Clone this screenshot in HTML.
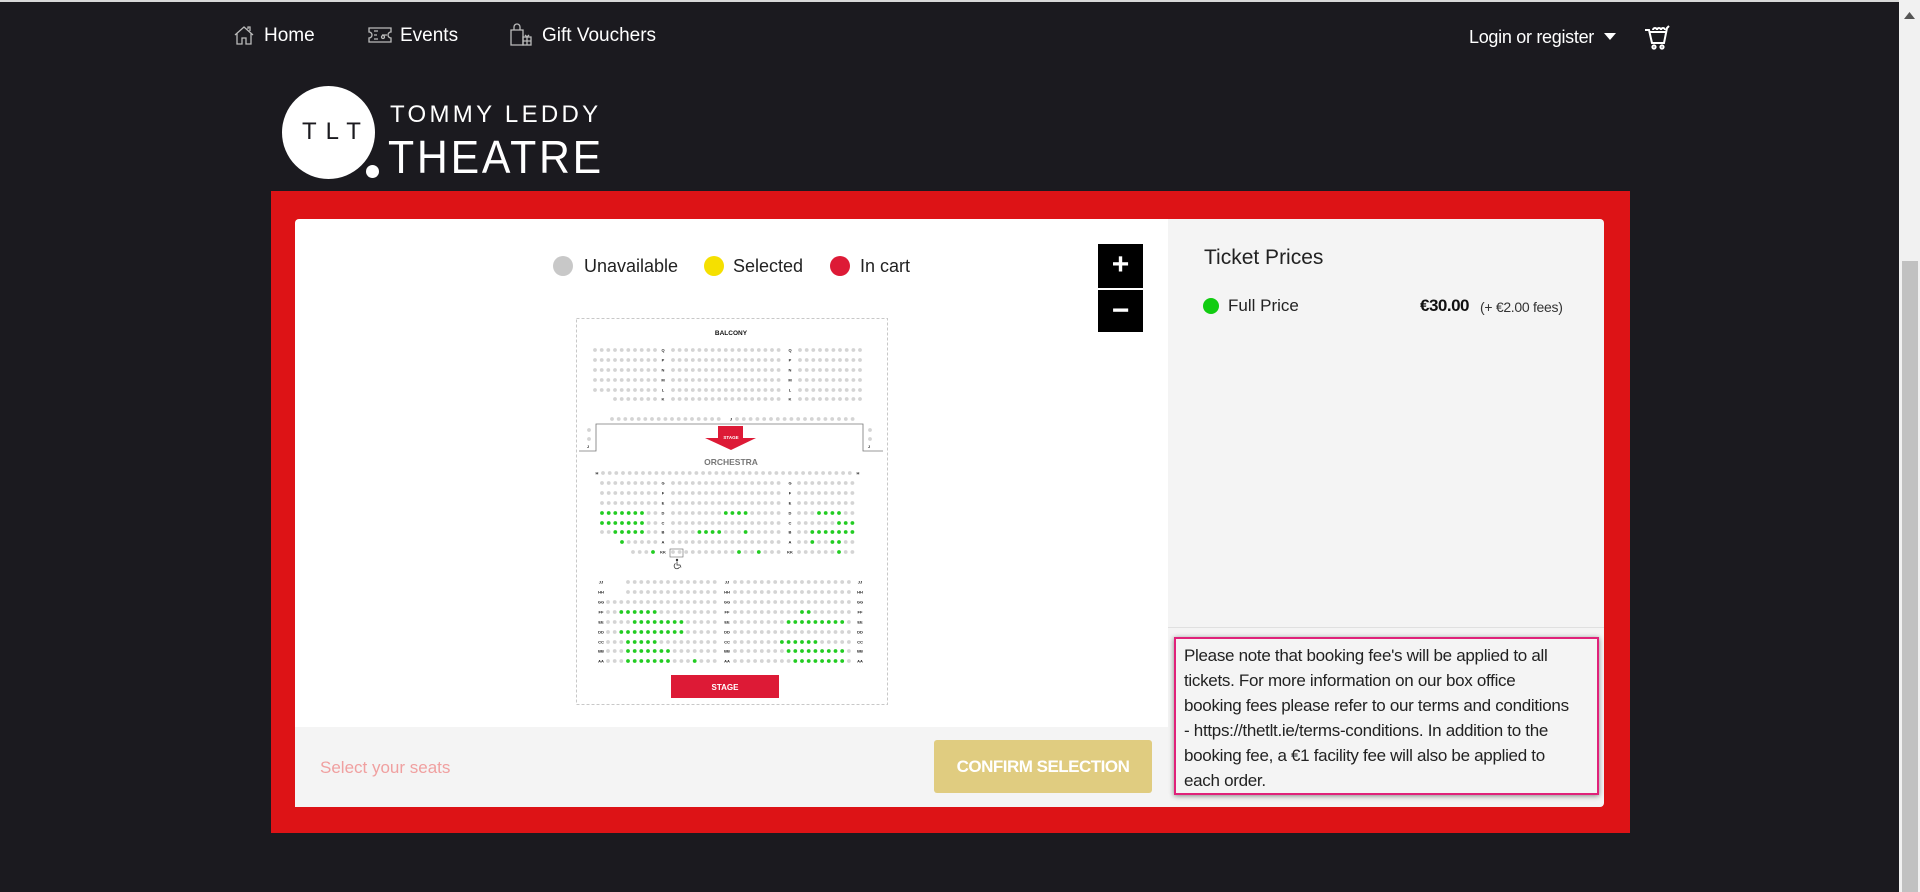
<!DOCTYPE html>
<html><head><meta charset="utf-8">
<style>
*{margin:0;padding:0;box-sizing:border-box}
html,body{width:1920px;height:892px;overflow:hidden;background:#1b1a1f;font-family:"Liberation Sans",sans-serif}
.abs{position:absolute}
.nav{color:#fff;font-size:19px;top:25px}
.topline{left:0;top:0;width:1920px;height:2px;background:#d8d8d8}
.sb{left:1899px;top:0;width:21px;height:892px;background:#f1f1f1}
.thumb{left:1902px;top:261px;width:16px;height:631px;background:#c1c1c1}
.red{left:271px;top:191px;width:1359px;height:642px;background:#dd1316}
.white{left:295px;top:219px;width:873px;height:588px;background:#fff;border-radius:4px 0 0 4px}
.gray{left:1168px;top:219px;width:436px;height:588px;background:#f4f4f4;border-radius:0 4px 4px 0}
.leg{top:256px;font-size:18px;color:#222}
.dot{width:20px;height:20px;border-radius:50%;top:256px}
.zb{left:1098px;width:45px;background:#000;color:#fff;font-size:30px;text-align:center;line-height:42px;font-weight:bold}
.notice{left:1174px;top:637px;width:425px;height:158px;border:2px solid #e0227a;box-shadow:0 1px 5px rgba(0,0,0,.45);padding:4px 0 0 8px;font-size:17px;line-height:25px;color:#222;white-space:nowrap;letter-spacing:-0.3px}
</style></head><body>
<div class="abs topline"></div>
<svg class="abs" style="left:233px;top:24px" width="22" height="22" viewBox="0 0 22 22" fill="none" stroke="#bbb" stroke-width="1.3"><path d="M2 11 L11 3 L20 11 M4 9 V20 H9 V14 H13 V20 H18 V9 M15 5 V3 H17 V7"/></svg>
<div class="abs nav" style="left:264px">Home</div>
<svg class="abs" style="left:368px;top:26px" width="24" height="18" viewBox="0 0 24 18" fill="none" stroke="#bbb" stroke-width="1.3"><path d="M1 2 H23 V6 A3 3 0 0 0 23 12 V16 H1 V12 A3 3 0 0 0 1 6 Z M6 5 H10 M6 9 H9 M6 13 H10 M14 9 h5"/><circle cx="15" cy="11" r="1.5"/></svg>
<div class="abs nav" style="left:400px">Events</div>
<svg class="abs" style="left:509px;top:23px" width="24" height="24" viewBox="0 0 24 24" fill="none" stroke="#bbb" stroke-width="1.3"><path d="M2 7 H14 V22 H2 Z M5 7 V4 A3 3 0 0 1 11 4 V7"/><rect x="14" y="14" width="8" height="8"/><path d="M18 14 V22 M14 18 H22 M16 12 l2 2 l2 -2"/></svg>
<div class="abs nav" style="left:542px">Gift Vouchers</div>
<div class="abs nav" style="left:1469px;top:27px;font-size:18px;letter-spacing:-0.3px">Login or register</div>
<svg class="abs" style="left:1604px;top:33px" width="12" height="8"><path d="M0 0 H12 L6 7 Z" fill="#fff"/></svg>
<svg class="abs" style="left:1644px;top:23px" width="26" height="28" viewBox="0 0 26 28" fill="none" stroke="#fff" stroke-width="2"><path d="M1 7 H5 L8 20 H20 L23 5 L25 3 M5 9 H22"/><circle cx="10" cy="24" r="1.6"/><circle cx="18" cy="24" r="1.6"/><path d="M9 7 a2 2 0 0 1 4 0 a2 2 0 0 1 4 0 a2 2 0 0 1 4 0"/></svg>
<div class="abs" style="left:282px;top:86px;width:93px;height:93px;border-radius:50%;background:#fff"></div>
<div class="abs" style="left:366px;top:165px;width:13px;height:13px;border-radius:50%;background:#fff"></div>
<div class="abs" style="left:293px;top:118px;width:70px;text-align:center;font-size:24px;letter-spacing:9px;color:#1b1a1f;padding-left:9px">TLT</div>
<div class="abs" style="left:390px;top:101px;font-size:24px;letter-spacing:3.3px;color:#fff">TOMMY LEDDY</div>
<div class="abs" style="left:388px;top:133px;font-size:46px;letter-spacing:3px;color:#fff;line-height:48px;transform:scaleX(0.93);transform-origin:left">THEATRE</div>
<div class="abs sb"></div>
<svg class="abs" style="left:1904px;top:12px" width="11" height="7"><path d="M0 7 L5.5 0 L11 7Z" fill="#555"/></svg>
<div class="abs thumb"></div>
<div class="abs red"></div>
<div class="abs white"></div>
<div class="abs gray"></div>
<div class="abs" style="left:1168px;top:627px;width:436px;height:1px;background:#e0e0e0"></div>
<div class="abs dot" style="left:553px;background:#c8c8c8"></div>
<div class="abs leg" style="left:584px">Unavailable</div>
<div class="abs dot" style="left:704px;background:#f5e000"></div>
<div class="abs leg" style="left:733px">Selected</div>
<div class="abs dot" style="left:830px;background:#dd1a36"></div>
<div class="abs leg" style="left:860px">In cart</div>
<div class="abs zb" style="top:244px;height:44px">+</div>
<div class="abs zb" style="top:290px;height:42px">−</div>
<svg id="map" class="abs" style="left:560px;top:310px" width="340" height="400" viewBox="0 0 340 400" font-family="Liberation Sans" font-weight="bold">
<rect x="16.5" y="8.5" width="311" height="386" fill="none" stroke="#c8c8c8" stroke-dasharray="3 2"/>
<text x="171" y="25" font-size="6.5" text-anchor="middle" fill="#111">BALCONY</text>
<g font-size="4" fill="#222" text-anchor="middle">
<text x="103" y="41.5">Q</text><text x="230" y="41.5">Q</text>
<text x="103" y="51.5">P</text><text x="230" y="51.5">P</text>
<text x="103" y="61.5">N</text><text x="230" y="61.5">N</text>
<text x="103" y="71.5">M</text><text x="230" y="71.5">M</text>
<text x="103" y="81.5">L</text><text x="230" y="81.5">L</text>
<text x="103" y="90.5">K</text><text x="230" y="90.5">K</text>
<text x="171" y="110.5">J</text><text x="28" y="138">J</text><text x="309" y="138">J</text>
<text x="37" y="164.5">H</text><text x="298" y="164.5">H</text>
<text x="103" y="174.5">G</text><text x="230" y="174.5">G</text>
<text x="103" y="184.5">F</text><text x="230" y="184.5">F</text>
<text x="103" y="194.5">E</text><text x="230" y="194.5">E</text>
<text x="103" y="204.5">D</text><text x="230" y="204.5">D</text>
<text x="103" y="214.5">C</text><text x="230" y="214.5">C</text>
<text x="103" y="223.5">B</text><text x="230" y="223.5">B</text>
<text x="103" y="233.5">A</text><text x="230" y="233.5">A</text>
<text x="103" y="243.5">KK</text><text x="230" y="243.5">KK</text>
<text x="41" y="273.5">JJ</text><text x="167" y="273.5">JJ</text><text x="300" y="273.5">JJ</text>
<text x="41" y="283.5">HH</text><text x="167" y="283.5">HH</text><text x="300" y="283.5">HH</text>
<text x="41" y="293.5">GG</text><text x="167" y="293.5">GG</text><text x="300" y="293.5">GG</text>
<text x="41" y="303.5">FF</text><text x="167" y="303.5">FF</text><text x="300" y="303.5">FF</text>
<text x="41" y="313.5">EE</text><text x="167" y="313.5">EE</text><text x="300" y="313.5">EE</text>
<text x="41" y="323.5">DD</text><text x="167" y="323.5">DD</text><text x="300" y="323.5">DD</text>
<text x="41" y="333.5">CC</text><text x="167" y="333.5">CC</text><text x="300" y="333.5">CC</text>
<text x="41" y="342.5">BB</text><text x="167" y="342.5">BB</text><text x="300" y="342.5">BB</text>
<text x="41" y="352.5">AA</text><text x="167" y="352.5">AA</text><text x="300" y="352.5">AA</text>
</g>
<path d="M19 141 H36 V114 H303 V141 H323" fill="none" stroke="#777" stroke-width="0.8"/>
<rect x="158" y="116" width="25" height="12" fill="#dd1a36"/>
<path d="M145 128 H196 L171 140 Z" fill="#dd1a36"/>
<text x="171" y="129" font-size="4.5" fill="#fff" text-anchor="middle">STAGE</text>
<text x="171" y="155" font-size="8.5" fill="#777" text-anchor="middle">ORCHESTRA</text>
<rect x="110" y="239" width="13" height="8" fill="none" stroke="#666" stroke-width="0.6"/>
<g fill="none" stroke="#333" stroke-width="0.8"><circle cx="117" cy="250" r="0.8" fill="#333"/><path d="M117 251.5 V255 H120 L121 257.5 M115.5 253.5 A2.8 2.8 0 1 0 119.5 257"/></g>
<rect x="111" y="365" width="108" height="23" fill="#dd1a36"/>
<text x="165" y="380" font-size="8" fill="#fff" text-anchor="middle">STAGE</text>
<g id="dots"></g>
</svg>
<div class="abs" style="left:1204px;top:246px;font-size:21px;color:#222">Ticket Prices</div>
<div class="abs" style="left:1203px;top:298px;width:16px;height:16px;border-radius:50%;background:#1c1"></div>
<div class="abs" style="left:1228px;top:296px;font-size:17px;color:#222">Full Price</div>
<div class="abs" style="left:1420px;top:296px;font-size:17px;color:#111;font-weight:bold;letter-spacing:-0.5px">€30.00</div>
<div class="abs" style="left:1480px;top:299px;font-size:14px;color:#333;letter-spacing:-0.3px">(+ €2.00 fees)</div>
<div class="abs notice">Please note that booking fee's will be applied to all<br>tickets. For more information on our box office<br>booking fees please refer to our terms and conditions<br>- https://thetlt.ie/terms-conditions. In addition to the<br>booking fee, a €1 facility fee will also be applied to<br>each order.</div>
<div class="abs" style="left:295px;top:727px;width:873px;height:80px;background:#f4f4f4"></div>
<div class="abs" style="left:320px;top:758px;font-size:17px;color:#f0a0a0">Select your seats</div>
<div class="abs" style="left:934px;top:740px;width:218px;height:53px;background:#e0cc80;border-radius:3px;color:#fff;font-weight:bold;font-size:17px;text-align:center;line-height:53px;letter-spacing:-0.5px">CONFIRM SELECTION</div>
<script>
var g=document.getElementById('dots'),s='';
function row(x0,n,y,green,sp){sp=sp||6.67;for(var i=0;i<n;i++){var c=green&&green.indexOf(i)>=0?'#22cc22':'#d4d4d4';s+='<circle cx="'+(x0+i*sp).toFixed(1)+'" cy="'+y+'" r="1.9" fill="'+c+'"/>';}}
var by=[40,50,60,70,80];
by.forEach(function(y){row(35,10,y);row(113,17,y,null,6.6);row(240,10,y);});
row(55,7,89);row(113,17,89,null,6.6);row(240,10,89);
row(52,17,109);row(177,18,109,null,6.8);
row(29,1,120);row(29,1,129);row(310,1,120);row(310,1,129);
row(43,38,163);
var oy=[173,183,193,203,213,222,232,242];
var L=[[],[],[],[0,1,2,3,4,5,6],[0,1,2,3,4,5,6],[2,3,4,5,6],null,null];
var M=[[],[],[],[8,9,10,11],[],[4,5,6,7,11],[],[10,13]];
var R=[[],[],[],[3,4,5,6],[6,7,8],[2,3,4,5,6,7,8],[2,5,6],[6]];
for(var k=0;k<8;k++){
 if(k==6)row(62,6,oy[k],[0]);else if(k==7)row(73,4,oy[k],[3]);else row(42,9,oy[k],L[k]);
 row(113,17,oy[k],M[k],6.6);row(239,9,oy[k],R[k]);
}
var ly=[272,282,292,302,312,322,332,341,351];
var LL=[[],[],[],[2,3,4,5,6,7],[4,5,6,7,8,9,10,11],[2,3,4,5,6,7,8,9,10,11],[3,4,5,6,7],[3,4,5,6,7,8,9],[3,4,5,6,7,8,9,13]];
var RR=[[],[],[],[10,11],[8,9,10,11,12,13,14,15,16],[],[7,8,9,10,11,12],[8,9,10,11,12,13,14,15,16],[9,10,11,12,13,14,15,16]];
for(var k=0;k<9;k++){
 if(k<2)row(68,14,ly[k]);else row(48,17,ly[k],LL[k]);
 row(175,18,ly[k],RR[k],6.7);
}
g.innerHTML=s;
</script>
</body></html>
